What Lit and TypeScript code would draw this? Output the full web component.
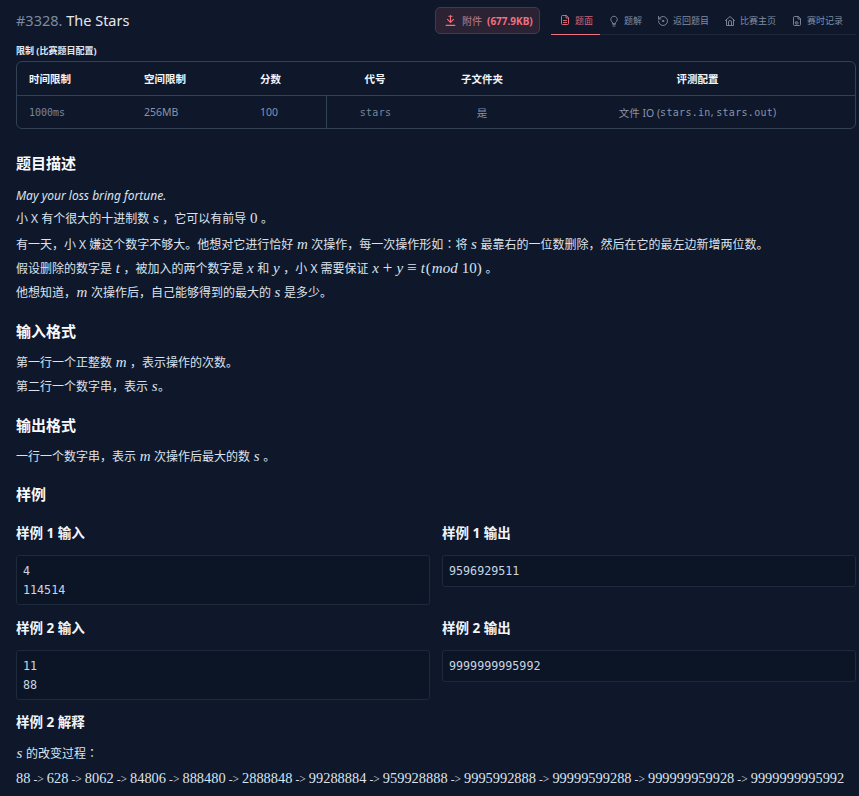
import { LitElement, html, css, svg } from 'lit';
import { customElement } from 'lit/decorators.js';

const icon = (paths: unknown, cls = '') => html`<svg class="icon ${cls}" viewBox="0 0 24 24" fill="none" stroke="currentColor" stroke-width="2" stroke-linecap="round" stroke-linejoin="round">${paths}</svg>`;

const icons = {
  download: svg`<path d="M4 21h16"/><path d="M12 3v12"/><path d="M6.500 10l5.500 5.500 5.500-5.500"/><path d="M9 4h6"/>`,
  doc: svg`<path d="M14 3H7a2 2 0 0 0-2 2v14a2 2 0 0 0 2 2h10a2 2 0 0 0 2-2V8z"/><path d="M14 3v5h5"/><path d="M9 13h6"/><path d="M9 17h6"/>`,
  bulb: svg`<path d="M9 18h6"/><path d="M10 22h4"/><path d="M8.500 14.500a6.500 6.500 0 1 1 7 0c-.6.6-1 1.300-1 2v1.500h-5v-1.500c0-.7-.4-1.400-1-2z"/>`,
  back: svg`<path d="M3 12a9 9 0 1 0 3-6.700L3 8"/><path d="M3 3v5h5"/><circle cx="12" cy="12" r="1.500"/>`,
  home: svg`<path d="M3 11l9-8 9 8"/><path d="M5 9v12h14V9"/><path d="M9 21v-7a3 3 0 0 1 6 0v7"/>`,
  record: svg`<path d="M14 3H7a2 2 0 0 0-2 2v14a2 2 0 0 0 2 2h10a2 2 0 0 0 2-2V8z"/><path d="M14 3v5h5"/><rect x="9" y="14" width="5" height="4" rx="1"/>`,
};

const tabs = [
  { label: '题面', icon: icons.doc, active: true },
  { label: '题解', icon: icons.bulb },
  { label: '返回题目', icon: icons.back },
  { label: '比赛主页', icon: icons.home },
  { label: '赛时记录', icon: icons.record },
];

const limits = [
  { head: '时间限制', value: '1000ms', cls: 'mono' },
  { head: '空间限制', value: '256MB', cls: 'plain' },
  { head: '分数', value: '100', cls: 'plain' },
  { head: '代号', value: 'stars', cls: 'mono spaced center split' },
  { head: '子文件夹', value: '是', cls: 'plain center' },
];

const chain = ['88', '628', '8062', '84806', '888480', '2888848', '99288884', '959928888', '9995992888', '99999599288', '999999959928', '9999999995992'];

const m = (t: string) => html`<span class="math">${t}</span>`;
const n = (t: string) => html`<span class="math upright">${t}</span>`;
const op = (t: string) => html`<span class="math upright op">${t}</span>`;
const colon = html`<span class="colon">：</span>`;

@customElement('app-root')
export class AppRoot extends LitElement {
  static styles = css`
    :host {
      display: block;
      height: 796px;
      overflow: hidden;
      background: #0f172a;
      color: #dbe3ee;
      font-family: "Noto Sans", "Noto Sans CJK SC", sans-serif;
      font-size: 12px;
      text-spacing-trim: space-all;
    }
    .page { padding: 0 3px 0 16px; }

    /* top bar */
    .top { display: flex; align-items: flex-start; height: 44px; }
    .title { flex: 1; font-size: 14.500px; line-height: 20px; padding-top: 10px; color: #e2e8f0; }
    .title span { color: #7c8aa0; }
    .attach {
      display: flex; align-items: center; gap: 5px;
      box-sizing: border-box; height: 27px; width: 105px; margin: 7px 11px 0 0; padding-left: 8px;
      background: #2b2234; border: 1px solid #46384a; border-radius: 5px;
      color: #f0707f; font-size: 10px; font-weight: 700; white-space: nowrap;
    }
    .attach .label { color: #a8707f; font-weight: 500; }
    .attach .icon { width: 13px; height: 13px; }
    .tabs { display: flex; width: 305px; height: 35px; border-bottom: 1px solid #1e293b; box-sizing: border-box; }
    .tab {
      display: flex; align-items: center; gap: 4px; padding: 6px 7px 0 8px; margin-bottom: -1px;
      color: #7f8ea3; font-size: 9px; white-space: nowrap;
    }
    .tab.active { color: #c9667a; border-bottom: 1px solid #f0707f; }
    .tab.active .icon { color: #f0707f; }
    .tab .icon { width: 12px; height: 12px; stroke-width: 1.800; }

    /* limits table */
    .caption { font-size: 9px; font-weight: 700; line-height: 12px; margin-top: 1px; color: #e2e8f0; }
    .table {
      display: grid; grid-template-columns: 115px 116px 78px 98px 116px 1fr;
      margin-top: 4px; border: 1px solid #334155; border-radius: 6px;
    }
    .cell { height: 32px; display: flex; align-items: center; padding-left: 12px; }
    .head { font-size: 10.500px; font-weight: 700; color: #f1f5f9; border-bottom: 1px solid #334155; height: 34px; box-sizing: border-box; }
    .center { justify-content: center; padding-left: 0; }
    .val { color: #8595ac; font-size: 10.500px; }
    .split { border-left: 1px solid #334155; }
    .mono { font-family: "DejaVu Sans Mono", monospace; font-size: 10px; color: #7687a0; }
    .spaced { letter-spacing: .3px; }
    .cfg-mono { font-family: "DejaVu Sans Mono", monospace; font-size: 10px; letter-spacing: .3px; }

    /* statement */
    h2 { font-size: 15px; line-height: 20px; font-weight: 700; color: #f8fafc; margin: 0; }
    h3 { font-size: 13.500px; line-height: 18px; font-weight: 700; color: #f1f5f9; margin: 0; }
    p { margin: 0; line-height: 24px; white-space: nowrap; }
    .math { font-family: "Liberation Serif", serif; font-style: italic; font-size: 15px; line-height: 1; margin: 0 .5px; }
    .upright { font-style: normal; }
    .op { font-size: 17px; margin: 0 3.500px; }
    .colon { font-family: "Noto Sans CJK TC", sans-serif; }
    .first { margin-top: 24px; }
    .section { margin-top: 16px; }
    .lead { margin-top: 10px; }
    .quote { font-style: italic; margin-top: 11px; margin-bottom: -1px; }
    .tall { margin-top: 1px; }

    /* samples */
    .samples { display: grid; grid-template-columns: 414px 414px; column-gap: 12px; margin-top: 20px; }
    .samples-title { margin-top: 15px; }
    .sample { display: flex; flex-direction: column; }
    .code {
      box-sizing: border-box; height: 50px; margin-top: 13px; margin-bottom: 14px; padding: 6px 6px;
      background: #0c1526; border: 1px solid #1e293b; border-radius: 3px;
      font-family: "DejaVu Sans Mono", monospace; font-size: 11.700px; line-height: 18.500px; color: #cbd5e1;
      white-space: pre;
    }
    .code.short { height: 32px; }
    .explain { margin-top: -1px; }
    .chain { font-family: "Liberation Serif", serif; font-size: 14.400px; }
    .arrow { font-size: 11.500px; margin: 0 3.050px; }
  `;

  render() {
    return html`
      <div class="page">
        <div class="top">
          <div class="title"><span>#3328.</span> The Stars</div>
          <div class="attach">${icon(icons.download)}<span class="label">附件</span> (677.9KB)</div>
          <div class="tabs">
            ${tabs.map(
              (t) => html`<div class="tab ${t.active ? 'active' : ''}">${icon(t.icon)}${t.label}</div>`,
            )}
          </div>
        </div>

        <div class="caption">限制 (比赛题目配置)</div>
        <div class="table">
          ${limits.map((l) => html`<div class="cell head ${l.cls.includes('center') ? 'center' : ''}">${l.head}</div>`)}
          <div class="cell head center">评测配置</div>
          ${limits.map((l) => html`<div class="cell val ${l.cls}">${l.value}</div>`)}
          <div class="cell val center">文件 IO (<span class="cfg-mono">stars.in</span>,&nbsp;<span class="cfg-mono">stars.out</span>)</div>
        </div>

        <h2 class="first">题目描述</h2>
        <p class="quote">May your loss bring fortune.</p>
        <p>小 X 有个很大的十进制数 ${m('s')} ，它可以有前导 ${n('0')} 。</p>
        <p class="tall">有一天，小 X 嫌这个数字不够大。他想对它进行恰好 ${m('m')} 次操作，每一次操作形如${colon}将 ${m('s')} 最靠右的一位数删除，然后在它的最左边新增两位数。</p>
        <p>假设删除的数字是 ${m('t')} ，被加入的两个数字是 ${m('x')} 和 ${m('y')} ，小 X 需要保证 ${m('x')}${op('+')}${m('y')}${op('≡')}${m('t')}${n('(')}${m('mod')} ${n('10)')} 。</p>
        <p>他想知道，${m('m')} 次操作后，自己能够得到的最大的 ${m('s')} 是多少。</p>

        <h2 class="section">输入格式</h2>
        <p class="lead">第一行一个正整数 ${m('m')} ，表示操作的次数。</p>
        <p>第二行一个数字串，表示 ${m('s')}。</p>

        <h2 class="section">输出格式</h2>
        <p class="lead">一行一个数字串，表示 ${m('m')} 次操作后最大的数 ${m('s')} 。</p>

        <h2 class="section samples-title">样例</h2>
        <div class="samples">
          <div class="sample"><h3>样例 1 输入</h3><div class="code">4
114514</div></div>
          <div class="sample"><h3>样例 1 输出</h3><div class="code short">9596929511</div></div>
          <div class="sample"><h3>样例 2 输入</h3><div class="code">11
88</div></div>
          <div class="sample"><h3>样例 2 输出</h3><div class="code short">9999999995992</div></div>
        </div>
        <h3 class="explain">样例 2 解释</h3>
        <p class="lead">${m('s')} 的改变过程${colon}</p>
        <p class="chain">${chain.map((c, i) => html`${i ? html`<span class="arrow">-&gt;</span>` : ''}${c}`)}</p>
      </div>
    `;
  }
}
